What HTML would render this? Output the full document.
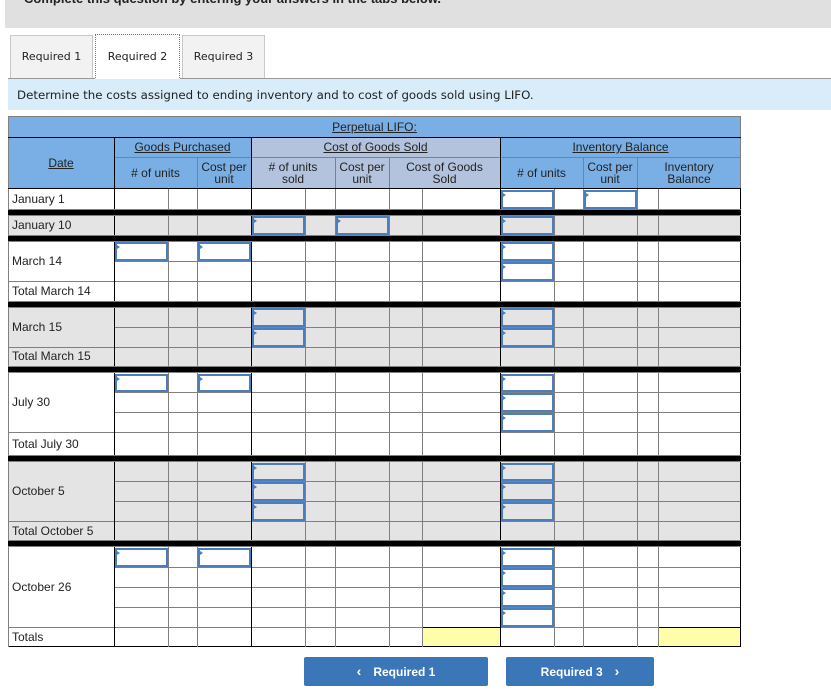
<!DOCTYPE html>
<html><head><meta charset="utf-8"><style>
*{margin:0;padding:0;box-sizing:border-box}
body{width:831px;height:698px;position:relative;background:#fff;font-family:"Liberation Sans",Arial,sans-serif;font-size:12px;color:#222;overflow:hidden}
div{position:absolute}
.h{height:1px;background:#808080}
.hb{height:1px;background:#000}
.v{width:1px;background:#808080}
.vb{width:1px;background:#000}
.g{background:#e4e4e4}
.sep{left:8px;width:733px;height:7px;background:#000;border-top:1px solid #808080;border-bottom:1px solid #808080}
.i{border:2px solid #4a7ebf}
.i:before{content:"";position:absolute;left:0;top:1px;border-left:3px solid #4a7ebf;border-top:2px solid transparent;border-bottom:2px solid transparent}
.t{left:12px;font-size:12px;line-height:14px}
.c{text-align:center;line-height:12px;font-size:12px}
.u{text-decoration:underline}
.y{background:#ffffaa}
.btn{background:#3a76b8;color:#fff;font-weight:bold;font-size:12px;text-align:center;line-height:29px;height:29px;top:657px;border-radius:2px}
.tab{top:35px;height:44px;background:#f2f2f2;border:1px solid #c8c8c8;border-bottom:none;font-family:"DejaVu Sans",Verdana,sans-serif;font-size:11px;text-align:center;line-height:42px}
</style></head><body>
<div style="left:5px;top:0;width:826px;height:28px;background:#e0e0e0"></div>
<div style="left:24px;top:-9px;font-weight:bold;font-size:13px;white-space:nowrap">Complete this question by entering your answers in the tabs below.</div>
<div class="tab" style="left:10px;width:83px">Required 1</div>
<div class="tab" style="left:95px;width:85px;top:34px;height:46px;background:#fff;border:1px dotted #4a7ebf;border-bottom:none;line-height:44px">Required 2</div>
<div class="tab" style="left:182px;width:83px">Required 3</div>
<div style="left:8px;top:78px;width:87px;height:1px;background:#999"></div>
<div style="left:180px;top:78px;width:651px;height:1px;background:#999"></div>
<div style="left:8px;top:79px;width:823px;height:31px;background:#d9ecf9"></div>
<div style="left:17px;top:88px;font-family:'DejaVu Sans',Verdana,sans-serif;font-size:11.8px;white-space:nowrap">Determine the costs assigned to ending inventory and to cost of goods sold using LIFO.</div>

<div style="left:8px;top:116px;width:733px;height:73px;background:#7aafe5;border:1px solid #808080"></div>
<div style="left:251px;top:137px;width:249px;height:52px;background:#b3c3dd"></div>
<div class="hb" style="left:8px;top:137px;width:733px"></div>
<div class="h" style="left:114px;top:157px;width:627px"></div>
<div class="vb" style="left:114px;top:137px;height:52px"></div>
<div class="vb" style="left:251px;top:137px;height:52px"></div>
<div class="vb" style="left:500px;top:137px;height:52px"></div>
<div class="v" style="left:197px;top:157px;height:32px"></div>
<div class="v" style="left:335px;top:157px;height:32px"></div>
<div class="v" style="left:389px;top:157px;height:32px"></div>
<div class="v" style="left:583px;top:157px;height:32px"></div>
<div class="v" style="left:637px;top:157px;height:32px"></div>
<div class="c u" style="left:8px;top:121px;width:733px">Perpetual LIFO:</div>
<div class="c u" style="left:114px;top:141px;width:137px">Goods Purchased</div>
<div class="c u" style="left:251px;top:141px;width:249px">Cost of Goods Sold</div>
<div class="c u" style="left:500px;top:141px;width:241px">Inventory Balance</div>
<div class="c u" style="left:8px;top:157px;width:106px">Date</div>
<div class="c" style="left:114px;top:167px;width:83px"># of units</div>
<div class="c" style="left:197px;top:161px;width:54px">Cost per<br>unit</div>
<div class="c" style="left:251px;top:161px;width:84px"># of units<br>sold</div>
<div class="c" style="left:335px;top:161px;width:54px">Cost per<br>unit</div>
<div class="c" style="left:389px;top:161px;width:111px">Cost of Goods<br>Sold</div>
<div class="c" style="left:500px;top:167px;width:83px"># of units</div>
<div class="c" style="left:583px;top:161px;width:54px">Cost per<br>unit</div>
<div class="c" style="left:637px;top:161px;width:104px">Inventory<br>Balance</div>
<div class="hb" style="left:8px;top:188px;width:733px"></div>

<div class="g" style="left:8px;top:215px;width:733px;height:20px"></div>
<div class="g" style="left:8px;top:307px;width:733px;height:60px"></div>
<div class="g" style="left:8px;top:462px;width:733px;height:79px"></div>
<div class="y" style="left:422px;top:627px;width:78px;height:20px"></div>
<div class="y" style="left:658px;top:627px;width:83px;height:20px"></div>

<div class="h" style="left:8px;top:209px;width:733px"></div>
<div class="h" style="left:8px;top:235px;width:733px"></div>
<div class="h" style="left:114px;top:261px;width:627px"></div>
<div class="h" style="left:8px;top:281px;width:733px"></div>
<div class="h" style="left:8px;top:301px;width:733px"></div>
<div class="h" style="left:114px;top:327px;width:627px"></div>
<div class="h" style="left:8px;top:347px;width:733px"></div>
<div class="h" style="left:8px;top:367px;width:733px"></div>
<div class="h" style="left:114px;top:392px;width:627px"></div>
<div class="h" style="left:114px;top:412px;width:627px"></div>
<div class="h" style="left:8px;top:432px;width:733px"></div>
<div class="h" style="left:8px;top:455px;width:733px"></div>
<div class="h" style="left:114px;top:481px;width:627px"></div>
<div class="h" style="left:114px;top:501px;width:627px"></div>
<div class="h" style="left:8px;top:521px;width:733px"></div>
<div class="h" style="left:8px;top:541px;width:733px"></div>
<div class="h" style="left:114px;top:567px;width:627px"></div>
<div class="h" style="left:114px;top:587px;width:627px"></div>
<div class="h" style="left:114px;top:607px;width:627px"></div>
<div class="h" style="left:8px;top:627px;width:733px"></div>
<div class="hb" style="left:8px;top:646px;width:733px"></div>
<div class="hb" style="left:422px;top:627px;width:78px"></div>
<div class="hb" style="left:658px;top:627px;width:83px"></div>

<div class="v" style="left:8px;top:189px;height:458px"></div>
<div class="vb" style="left:114px;top:189px;height:458px"></div>
<div class="v" style="left:168px;top:189px;height:458px"></div>
<div class="v" style="left:197px;top:189px;height:458px"></div>
<div class="vb" style="left:251px;top:189px;height:458px"></div>
<div class="v" style="left:305px;top:189px;height:458px"></div>
<div class="v" style="left:335px;top:189px;height:458px"></div>
<div class="v" style="left:389px;top:189px;height:458px"></div>
<div class="v" style="left:422px;top:189px;height:458px"></div>
<div class="vb" style="left:500px;top:189px;height:458px"></div>
<div class="v" style="left:554px;top:189px;height:458px"></div>
<div class="v" style="left:583px;top:189px;height:458px"></div>
<div class="v" style="left:637px;top:189px;height:458px"></div>
<div class="v" style="left:658px;top:189px;height:458px"></div>
<div class="vb" style="left:740px;top:189px;height:458px"></div>

<div class="sep" style="top:209px"></div>
<div class="sep" style="top:235px"></div>
<div class="sep" style="top:301px"></div>
<div class="sep" style="top:366px"></div>
<div class="sep" style="top:455px"></div>
<div class="sep" style="top:540px"></div>

<div class="t" style="top:192px">January 1</div>
<div class="t" style="top:218px">January 10</div>
<div class="t" style="top:254px">March 14</div>
<div class="t" style="top:284px">Total March 14</div>
<div class="t" style="top:320px">March 15</div>
<div class="t" style="top:349px">Total March 15</div>
<div class="t" style="top:395px">July 30</div>
<div class="t" style="top:437px">Total July 30</div>
<div class="t" style="top:484px">October 5</div>
<div class="t" style="top:524px">Total October 5</div>
<div class="t" style="top:580px">October 26</div>
<div class="t" style="top:630px">Totals</div>

<div class="i" style="left:501px;top:190px;width:53px;height:19px"></div>
<div class="i" style="left:584px;top:190px;width:53px;height:19px"></div>
<div class="i" style="left:252px;top:216px;width:53px;height:19px"></div>
<div class="i" style="left:336px;top:216px;width:53px;height:19px"></div>
<div class="i" style="left:501px;top:216px;width:53px;height:19px"></div>
<div class="i" style="left:115px;top:242px;width:53px;height:19px"></div>
<div class="i" style="left:198px;top:242px;width:53px;height:19px"></div>
<div class="i" style="left:501px;top:242px;width:53px;height:19px"></div>
<div class="i" style="left:501px;top:262px;width:53px;height:19px"></div>
<div class="i" style="left:252px;top:308px;width:53px;height:19px"></div>
<div class="i" style="left:252px;top:328px;width:53px;height:19px"></div>
<div class="i" style="left:501px;top:308px;width:53px;height:19px"></div>
<div class="i" style="left:501px;top:328px;width:53px;height:19px"></div>
<div class="i" style="left:115px;top:374px;width:53px;height:18px"></div>
<div class="i" style="left:198px;top:374px;width:53px;height:18px"></div>
<div class="i" style="left:501px;top:374px;width:53px;height:18px"></div>
<div class="i" style="left:501px;top:393px;width:53px;height:19px"></div>
<div class="i" style="left:501px;top:413px;width:53px;height:19px"></div>
<div class="i" style="left:252px;top:463px;width:53px;height:18px"></div>
<div class="i" style="left:252px;top:482px;width:53px;height:19px"></div>
<div class="i" style="left:252px;top:502px;width:53px;height:19px"></div>
<div class="i" style="left:501px;top:463px;width:53px;height:18px"></div>
<div class="i" style="left:501px;top:482px;width:53px;height:19px"></div>
<div class="i" style="left:501px;top:502px;width:53px;height:19px"></div>
<div class="i" style="left:115px;top:548px;width:53px;height:19px"></div>
<div class="i" style="left:198px;top:548px;width:53px;height:19px"></div>
<div class="i" style="left:501px;top:548px;width:53px;height:19px"></div>
<div class="i" style="left:501px;top:568px;width:53px;height:19px"></div>
<div class="i" style="left:501px;top:588px;width:53px;height:19px"></div>
<div class="i" style="left:501px;top:608px;width:53px;height:19px"></div>

<div class="btn" style="left:304px;width:184px"><span style="margin-right:12px;font-size:14px">&#8249;</span>Required 1</div>
<div class="btn" style="left:506px;width:148px">Required 3<span style="margin-left:12px;font-size:14px">&#8250;</span></div>
</body></html>
